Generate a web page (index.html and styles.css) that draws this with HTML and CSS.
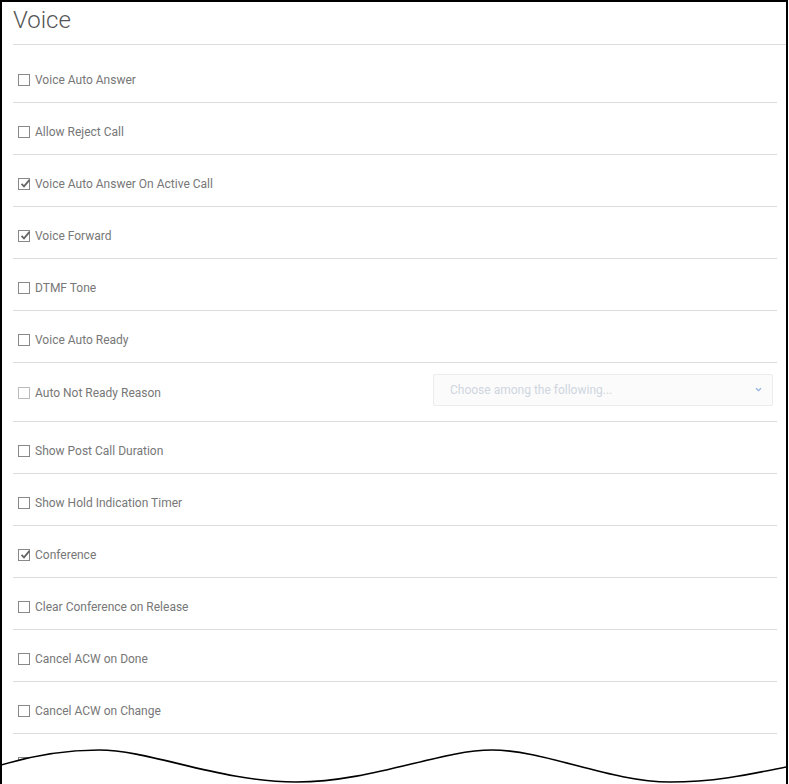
FILE: index.html
```html
<!DOCTYPE html>
<html>
<head>
<meta charset="utf-8">
<link rel="stylesheet" href="styles.css">
</head>
<body>
<div class="frame">
  <div class="header"><h1 class="title">Voice</h1></div>
  <div class="list">
    <div class="row"><span class="cb"></span><span class="label">Voice Auto Answer</span></div>
    <div class="row"><span class="cb"></span><span class="label">Allow Reject Call</span></div>
    <div class="row"><span class="cb checked"><svg viewBox="0 0 12 12" width="12" height="12"><path d="M2.5 5.8 L5 8.3 L10.5 1.8" fill="none" stroke="#666" stroke-width="1.8"/></svg></span><span class="label">Voice Auto Answer On Active Call</span></div>
    <div class="row"><span class="cb checked"><svg viewBox="0 0 12 12" width="12" height="12"><path d="M2.5 5.8 L5 8.3 L10.5 1.8" fill="none" stroke="#666" stroke-width="1.8"/></svg></span><span class="label">Voice Forward</span></div>
    <div class="row"><span class="cb"></span><span class="label">DTMF Tone</span></div>
    <div class="row"><span class="cb"></span><span class="label">Voice Auto Ready</span></div>
    <div class="row row-select">
      <span class="cb disabled"></span><span class="label">Auto Not Ready Reason</span>
      <div class="select"><span class="placeholder">Choose among the following...</span>
        <svg class="chev" viewBox="0 0 8 6" width="7" height="5"><path d="M1 1.5 L4 4.5 L7 1.5" fill="none" stroke="#8fb0e0" stroke-width="1.4"/></svg>
      </div>
    </div>
    <div class="row"><span class="cb"></span><span class="label">Show Post Call Duration</span></div>
    <div class="row"><span class="cb"></span><span class="label">Show Hold Indication Timer</span></div>
    <div class="row"><span class="cb checked"><svg viewBox="0 0 12 12" width="12" height="12"><path d="M2.5 5.8 L5 8.3 L10.5 1.8" fill="none" stroke="#666" stroke-width="1.8"/></svg></span><span class="label">Conference</span></div>
    <div class="row"><span class="cb"></span><span class="label">Clear Conference on Release</span></div>
    <div class="row"><span class="cb"></span><span class="label">Cancel ACW on Done</span></div>
    <div class="row"><span class="cb"></span><span class="label">Cancel ACW on Change</span></div>
    <div class="row"><span class="cb"></span><span class="label">Cancel ACW on Logout</span></div>
  </div>
  <svg class="tear" viewBox="0 0 789 44" width="789" height="44" preserveAspectRatio="none">
    <path d="M-2 26 C 30 16, 60 10, 99 10 C 150 10, 220 42, 296 42 C 372 42, 440 10, 492 10 C 545 10, 610 42, 670 42 C 720 42, 760 32, 791 26 L 791 44 L -2 44 Z" fill="#fff" stroke="none"/>
    <path d="M-2 26 C 30 16, 60 10, 99 10 C 150 10, 220 42, 296 42 C 372 42, 440 10, 492 10 C 545 10, 610 42, 670 42 C 720 42, 760 32, 791 26" fill="none" stroke="#000" stroke-width="1.6"/>
  </svg>
</div>
</body>
</html>
```
FILE: styles.css
```css
html, body {
  margin: 0;
  padding: 0;
  background: #fff;
}
.frame {
  position: relative;
  width: 788px;
  height: 784px;
  box-sizing: border-box;
  border-left: 2px solid #000;
  border-top: 2px solid #000;
  border-right: 2px solid #000;
  overflow: hidden;
  font-family: Roboto, "Liberation Sans", sans-serif;
}
.header {
  margin-left: 11px;
  box-sizing: border-box;
  height: 43px;
  border-bottom: 1px solid #dcdcdc;
}
.title {
  margin: 0;
  padding-top: 4px;
  font-size: 24px;
  font-weight: 300;
  color: #555;
  line-height: 28px;
}
.list {
  margin-left: 11px;
  margin-right: 9px;
  padding-top: 6px;
}
.row {
  display: flex;
  align-items: center;
  height: 52px;
  box-sizing: border-box;
  padding-top: 6px;
  border-bottom: 1px solid #dcdcdc;
}
.row-select {
  height: 59px;
  padding-top: 1px;
  padding-right: 4px;
}
.cb {
  width: 10px;
  height: 10px;
  border: 1px solid #888;
  margin-left: 5px;
  margin-right: 5px;
  position: relative;
  flex: none;
}
.cb.disabled {
  border-color: #bbb;
}
.cb svg {
  position: absolute;
  left: 0;
  top: -1px;
}
.label {
  font-size: 12px;
  color: #777;
  line-height: 14px;
}
.select {
  margin-left: auto;
  width: 340px;
  height: 32px;
  box-sizing: border-box;
  border: 1px solid #ececec;
  border-radius: 2px;
  background: #fbfbfb;
  display: flex;
  align-items: center;
  padding-left: 16px;
  padding-right: 10px;
  margin-top: -6px;
}
.placeholder {
  font-size: 12px;
  color: #cfd6e0;
}
.chev {
  margin-left: auto;
}
.tear {
  position: absolute;
  left: -2px;
  bottom: 0;
  display: block;
}
```
